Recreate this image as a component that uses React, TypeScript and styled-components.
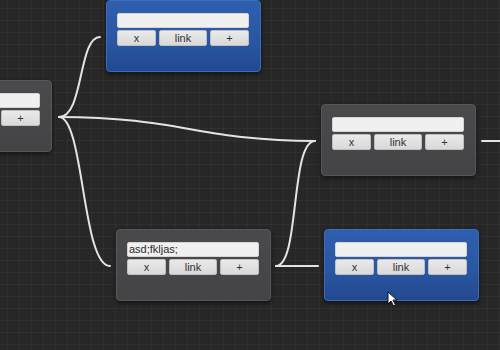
import React from "react";
import styled, { createGlobalStyle, css } from "styled-components";

const Global = createGlobalStyle`
  html, body { margin: 0; padding: 0; background: #272727; overflow: hidden; }
  * { box-sizing: border-box; }
`;

const Canvas = styled.div`
  position: relative;
  width: 500px;
  height: 350px;
  overflow: hidden;
  background-color: #272727;
  background-image:
    linear-gradient(to right, rgba(255,255,255,0.03) 1px, transparent 1px),
    linear-gradient(to bottom, rgba(255,255,255,0.03) 1px, transparent 1px);
  background-size: 12px 12px;
  background-position: 7px 8px;
  font-family: "Liberation Sans", Arial, sans-serif;
`;

const Wires = styled.svg`
  position: absolute;
  left: 0;
  top: 0;
  width: 500px;
  height: 350px;
  pointer-events: none;
`;

type Variant = "gray" | "blue";

const NodeBox = styled.div<{ $variant: Variant }>`
  position: absolute;
  width: 155px;
  height: 72px;
  border-radius: 4px;
  padding: 12px 11px 0 10px;
  display: flex;
  flex-direction: column;
  gap: 2px;
  box-shadow: 0 2px 4px rgba(0,0,0,0.55);
  ${(p) =>
    p.$variant === "blue"
      ? css`
          background: linear-gradient(to bottom, #2f5fad 0%, #2a57a4 55%, #22498f 100%);
          border: 1px solid #3a6cbc;
        `
      : css`
          background: linear-gradient(to bottom, #4a4a4d 0%, #444447 100%);
          border: 1px solid #56565a;
        `}
`;

const Field = styled.div`
  height: 15px;
  border-radius: 2px;
  background: #f0f0f0;
  border: 1px solid #d4d4d4;
  color: #2a2a2a;
  font-size: 11px;
  line-height: 13px;
  padding: 0 1px;
  white-space: nowrap;
  overflow: hidden;
`;

const Buttons = styled.div`
  display: grid;
  grid-template-columns: 39px 1fr 39px;
  gap: 3px;
`;

const Btn = styled.div`
  height: 16px;
  border-radius: 2px;
  background: linear-gradient(to bottom, #e9e9e9 0%, #d9d9d9 100%);
  border: 1px solid #c0c0c0;
  color: #333;
  font-size: 11px;
  line-height: 14px;
  text-align: center;
`;

const Cursor = styled.svg`
  position: absolute;
  left: 387px;
  top: 291px;
  width: 11px;
  height: 16px;
`;

type NodeProps = { x: number; y: number; variant: Variant; text?: string };

function Node({ x, y, variant, text = "" }: NodeProps) {
  return (
    <NodeBox $variant={variant} style={{ left: x, top: y }}>
      <Field>{text}</Field>
      <Buttons>
        <Btn>x</Btn>
        <Btn>link</Btn>
        <Btn>+</Btn>
      </Buttons>
    </NodeBox>
  );
}

export default function App() {
  return (
    <>
      <Global />
      <Canvas>
        <Wires viewBox="0 0 500 350">
          <g fill="none" stroke="#e4e4e4" strokeWidth="2" strokeLinecap="round">
            <path d="M59 117 C 84 117, 78 37, 100 37" />
            <path d="M59 117 C 84 117, 82 266, 110 266" />
            <path d="M59 117 C 180 117, 200 141, 315 141" />
            <path d="M276 266 C 300 266, 290 141, 315 141" />
            <path d="M276 266 L 318 266" />
            <path d="M482 141 L 500 141" />
          </g>
        </Wires>
        <Node x={106} y={0} variant="blue" />
        <Node x={-103} y={80} variant="gray" />
        <Node x={321} y={104} variant="gray" />
        <Node x={116} y={229} variant="gray" text="asd;fkljas;" />
        <Node x={324} y={229} variant="blue" />
        <Cursor viewBox="0 0 11 16">
          <path d="M1 1 L1 13 L4 10 L6.5 15 L8.5 14 L6 9 L10 9 Z" fill="#fff" stroke="#111" strokeWidth="1" strokeLinejoin="round" />
        </Cursor>
      </Canvas>
    </>
  );
}
